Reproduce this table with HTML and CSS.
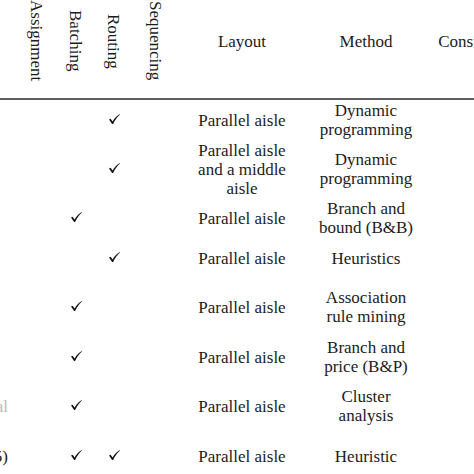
FILE: index.html
```html
<!DOCTYPE html>
<html>
<head>
<meta charset="utf-8">
<link rel="stylesheet" href="styles.css">
</head>
<body>
<div class="table">
  <div class="head">
    <div class="cell c0"></div>
    <div class="cell rot">Assignment</div>
    <div class="cell rot">Batching</div>
    <div class="cell rot">Routing</div>
    <div class="cell rot">Sequencing</div>
    <div class="cell">Layout</div>
    <div class="cell">Method</div>
    <div class="cell">Constraints</div>
  </div>
  <div class="body">
    <!-- row 1 -->
    <div class="cell c0"></div><div class="cell"></div><div class="cell"></div>
    <div class="cell"><svg class="chk" viewBox="0 0 11 10"><path d="M0 5.6 L1.6 4.7 L3.6 7.4 C5.6 4.1 8.1 1.5 11 0 L11 0.6 C8.5 2.6 6.1 6 4.1 10 L3.1 10 Z"/></svg></div>
    <div class="cell"></div>
    <div class="cell">Parallel aisle</div>
    <div class="cell">Dynamic<br>programming</div>
    <div class="cell"></div>
    <!-- row 2 -->
    <div class="cell c0"></div><div class="cell"></div><div class="cell"></div>
    <div class="cell"><svg class="chk" viewBox="0 0 11 10"><path d="M0 5.6 L1.6 4.7 L3.6 7.4 C5.6 4.1 8.1 1.5 11 0 L11 0.6 C8.5 2.6 6.1 6 4.1 10 L3.1 10 Z"/></svg></div>
    <div class="cell"></div>
    <div class="cell">Parallel aisle<br>and a middle<br>aisle</div>
    <div class="cell">Dynamic<br>programming</div>
    <div class="cell"></div>
    <!-- row 3 -->
    <div class="cell c0"></div><div class="cell"></div>
    <div class="cell"><svg class="chk" viewBox="0 0 11 10"><path d="M0 5.6 L1.6 4.7 L3.6 7.4 C5.6 4.1 8.1 1.5 11 0 L11 0.6 C8.5 2.6 6.1 6 4.1 10 L3.1 10 Z"/></svg></div>
    <div class="cell"></div><div class="cell"></div>
    <div class="cell">Parallel aisle</div>
    <div class="cell">Branch and<br>bound (B&amp;B)</div>
    <div class="cell"></div>
    <!-- row 4 -->
    <div class="cell c0"></div><div class="cell"></div><div class="cell"></div>
    <div class="cell"><svg class="chk" viewBox="0 0 11 10"><path d="M0 5.6 L1.6 4.7 L3.6 7.4 C5.6 4.1 8.1 1.5 11 0 L11 0.6 C8.5 2.6 6.1 6 4.1 10 L3.1 10 Z"/></svg></div>
    <div class="cell"></div>
    <div class="cell">Parallel aisle</div>
    <div class="cell">Heuristics</div>
    <div class="cell"></div>
    <!-- row 5 -->
    <div class="cell c0"></div><div class="cell"></div>
    <div class="cell"><svg class="chk" viewBox="0 0 11 10"><path d="M0 5.6 L1.6 4.7 L3.6 7.4 C5.6 4.1 8.1 1.5 11 0 L11 0.6 C8.5 2.6 6.1 6 4.1 10 L3.1 10 Z"/></svg></div>
    <div class="cell"></div><div class="cell"></div>
    <div class="cell">Parallel aisle</div>
    <div class="cell">Association<br>rule mining</div>
    <div class="cell"></div>
    <!-- row 6 -->
    <div class="cell c0"></div><div class="cell"></div>
    <div class="cell"><svg class="chk" viewBox="0 0 11 10"><path d="M0 5.6 L1.6 4.7 L3.6 7.4 C5.6 4.1 8.1 1.5 11 0 L11 0.6 C8.5 2.6 6.1 6 4.1 10 L3.1 10 Z"/></svg></div>
    <div class="cell"></div><div class="cell"></div>
    <div class="cell">Parallel aisle</div>
    <div class="cell">Branch and<br>price (B&amp;P)</div>
    <div class="cell"></div>
    <!-- row 7 -->
    <div class="cell c0 faint"><span>al</span></div><div class="cell"></div>
    <div class="cell"><svg class="chk" viewBox="0 0 11 10"><path d="M0 5.6 L1.6 4.7 L3.6 7.4 C5.6 4.1 8.1 1.5 11 0 L11 0.6 C8.5 2.6 6.1 6 4.1 10 L3.1 10 Z"/></svg></div>
    <div class="cell"></div><div class="cell"></div>
    <div class="cell">Parallel aisle</div>
    <div class="cell">Cluster<br>analysis</div>
    <div class="cell"></div>
    <!-- row 8 -->
    <div class="cell c0"><span>(2015)</span></div><div class="cell"></div>
    <div class="cell"><svg class="chk" viewBox="0 0 11 10"><path d="M0 5.6 L1.6 4.7 L3.6 7.4 C5.6 4.1 8.1 1.5 11 0 L11 0.6 C8.5 2.6 6.1 6 4.1 10 L3.1 10 Z"/></svg></div>
    <div class="cell"><svg class="chk" viewBox="0 0 11 10"><path d="M0 5.6 L1.6 4.7 L3.6 7.4 C5.6 4.1 8.1 1.5 11 0 L11 0.6 C8.5 2.6 6.1 6 4.1 10 L3.1 10 Z"/></svg></div>
    <div class="cell"></div>
    <div class="cell">Parallel aisle</div>
    <div class="cell">Heuristic</div>
    <div class="cell"></div>
  </div>
</div>
</body>
</html>
```
FILE: styles.css
```css
html, body {
  margin: 0;
  padding: 0;
  background: #ffffff;
  overflow: hidden;
  width: 474px;
  height: 474px;
}
.table {
  width: 540px;
  font-family: "Liberation Serif", "Times New Roman", serif;
  font-size: 17px;
  line-height: 19px;
  color: #1c1c1c;
}
.head, .body {
  display: grid;
  grid-template-columns: 14px 44px 34px 42px 42px 132px 116px 106px;
}
.head {
  grid-template-rows: 82px;
  padding-bottom: 16px;
  border-bottom: 2px solid #5e5e5e;
}
.body {
  grid-template-rows: 40px 58px 40px 40px 58px 42px 56px 44px;
}
.cell {
  display: flex;
  align-items: center;
  justify-content: center;
  text-align: center;
  white-space: nowrap;
}
.rot {
  writing-mode: vertical-rl;
}
.c0 {
  justify-content: flex-end;
  padding-right: 6px;
}
.faint {
  color: #bbbbbb;
}
.chk {
  width: 11px;
  height: 10px;
  fill: #141414;
  margin-left: 3px;
  margin-top: -3px;
}
```
